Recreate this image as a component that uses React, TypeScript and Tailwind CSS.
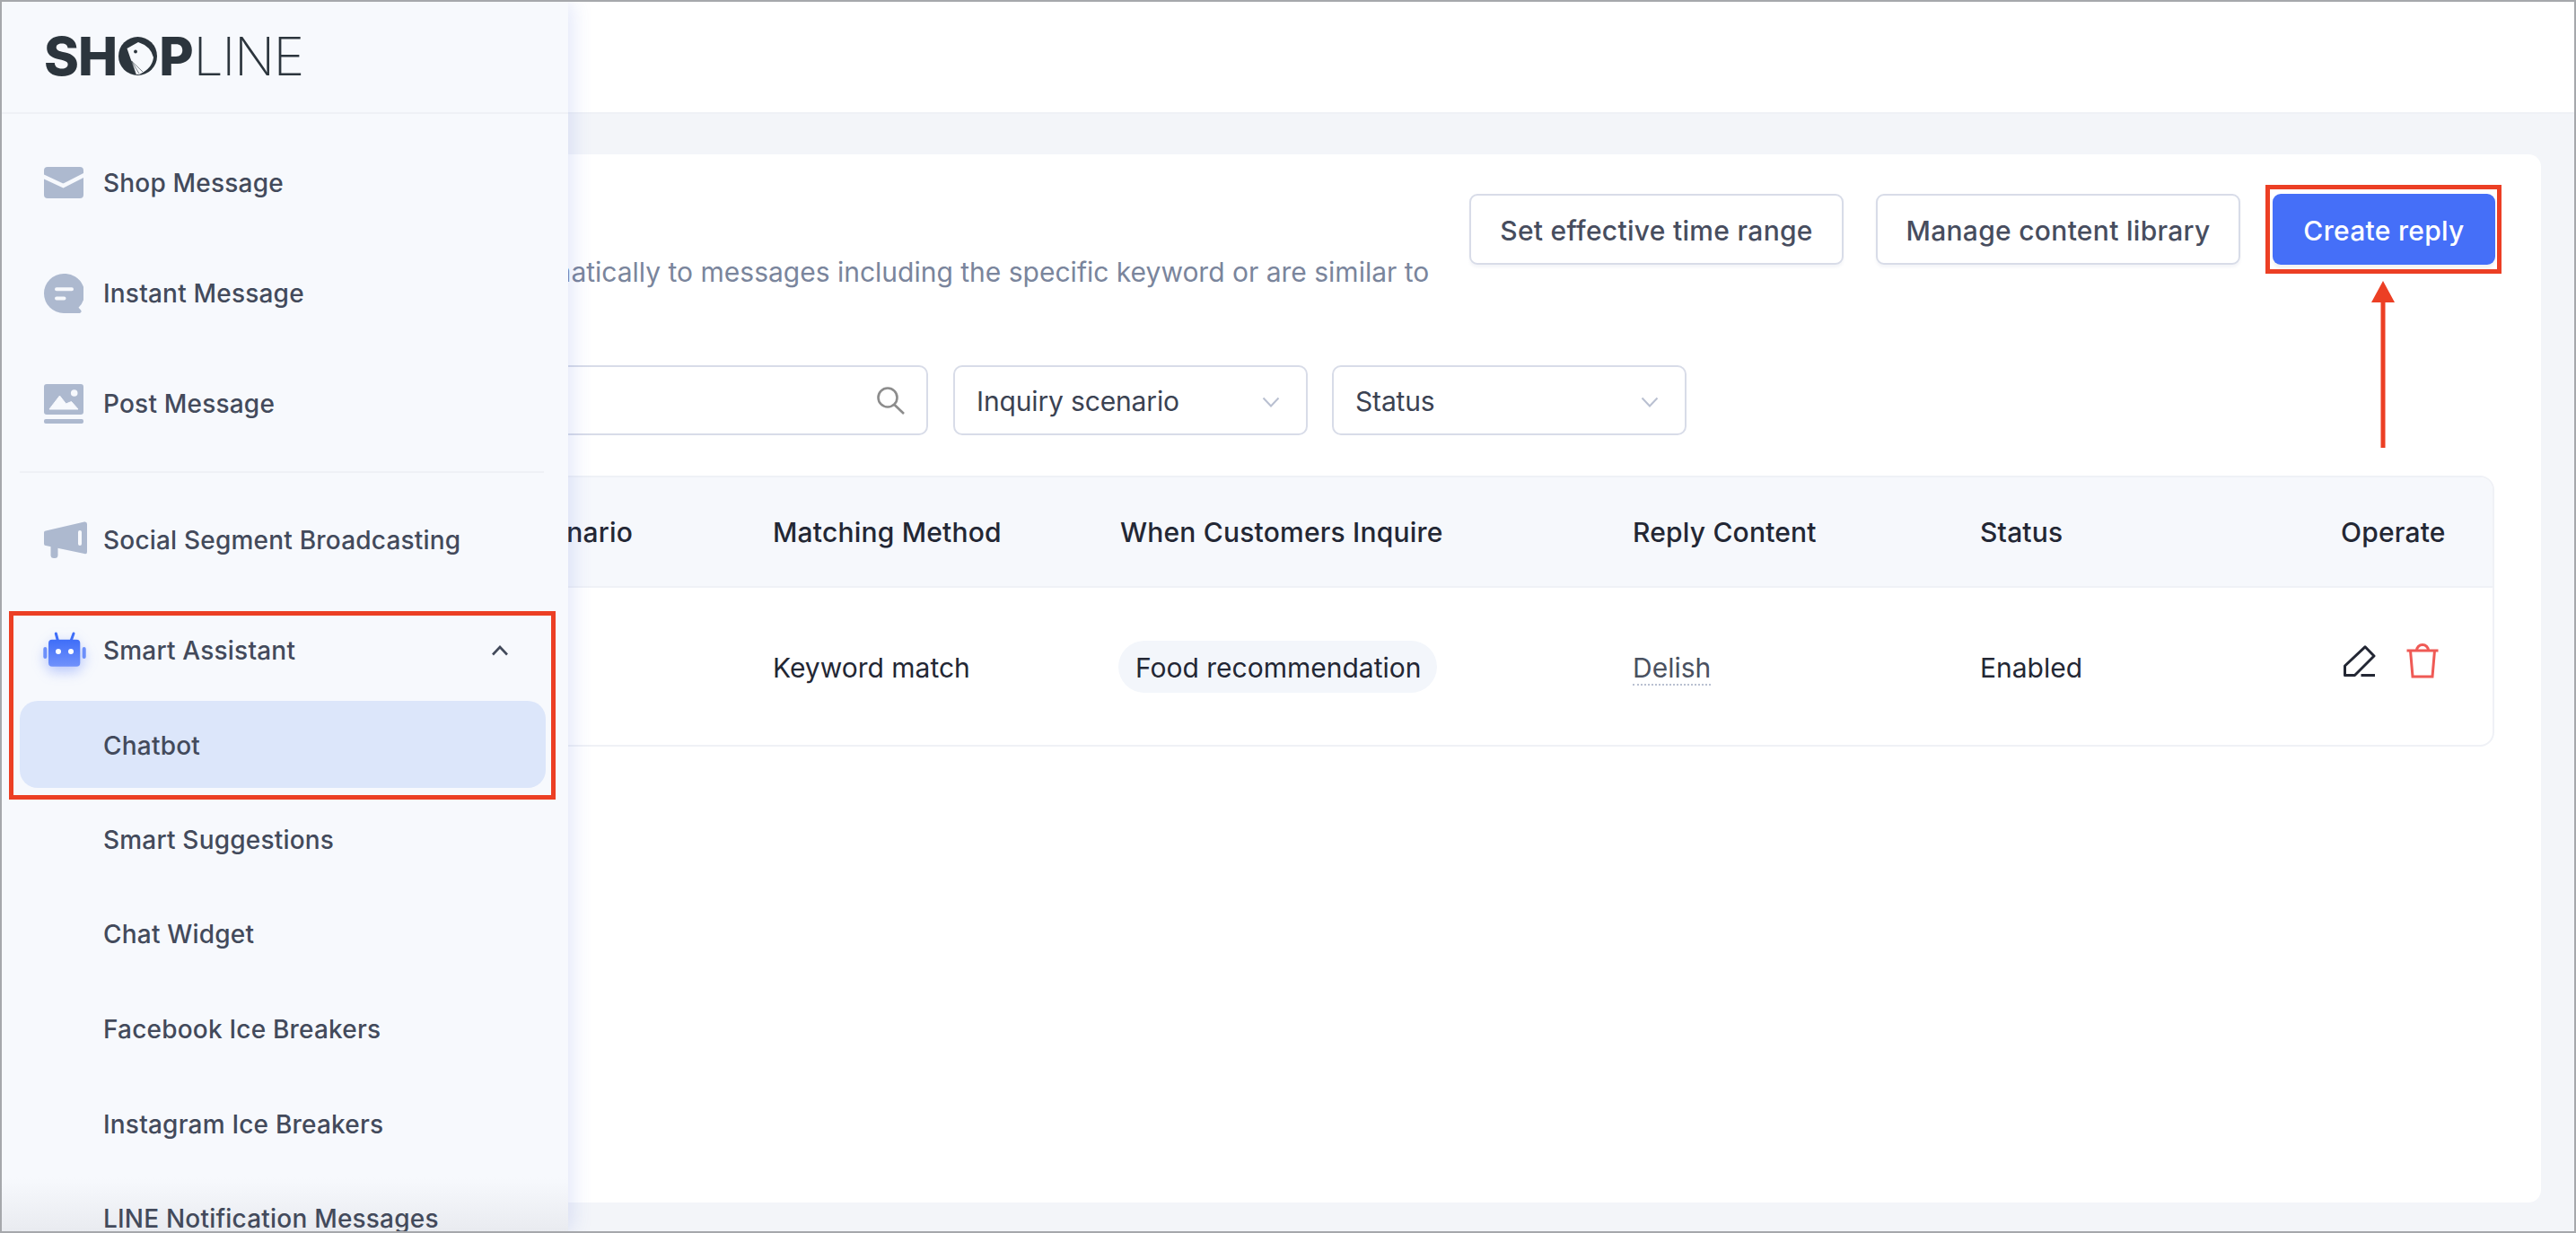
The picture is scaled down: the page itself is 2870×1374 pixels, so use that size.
import React from "react";

const Chevron = () => (
  <svg width="20" height="12" viewBox="0 0 20 12" fill="none" stroke="#b9c0d1" strokeWidth="2" className="mt-[3px]"><path d="M1.5 1.5 L10 10.5 L18.5 1.5" /></svg>
);

const MailIcon = () => (
  <svg width="44" height="35" viewBox="0 0 44 35"><rect width="44" height="35" rx="4" fill="#adb9cf" /><path d="M-1 10.5 L21.5 21 L45 9" fill="none" stroke="#f7f9fd" strokeWidth="4.5" /></svg>
);
const BubbleIcon = () => (
  <svg width="44" height="44" viewBox="0 0 44 44"><path d="M22 0a22 22 0 1 0 0 44h17.5a2 2 0 0 0 1.5-3.4l-2.5-2.8A22 22 0 0 0 22 0z" fill="#adb9cf" /><path d="M14 17.3h17M14 27.5h8.5" stroke="#f7f9fd" strokeWidth="4" strokeLinecap="round" /></svg>
);
const ImageIcon = () => (
  <svg width="44" height="44" viewBox="0 0 44 44"><rect width="44" height="34" rx="3" fill="#adb9cf" /><rect y="39" width="44" height="5" rx="2" fill="#adb9cf" /><circle cx="33.7" cy="10" r="3.8" fill="#f7f9fd" /><path d="M6 28 L17.5 13 L24.5 22 L30.5 19.5 L38 28 Z" fill="#f7f9fd" stroke="#f7f9fd" strokeLinejoin="round" /></svg>
);
const MegaphoneIcon = () => (
  <svg width="48" height="41" viewBox="0 0 48 41"><path d="M2 10.5 L45 0.5 Q48 0 48 3 V34 Q48 37 45 36 L2 27 Q0 27 0 25 V12.5 Q0 10.5 2 10.5 Z" fill="#adb9cf" /><rect x="7.5" y="25" width="8" height="16" rx="3.5" fill="#adb9cf" /><rect x="38" y="10" width="4" height="17" rx="2" fill="#f7f9fd" /></svg>
);
const RobotIcon = () => (
  <svg width="48" height="42" viewBox="0 0 48 42" className="drop-shadow-[0_6px_7px_rgba(70,110,250,0.35)]">
    <defs><linearGradient id="rb" x1="0" y1="0" x2="0" y2="1"><stop offset="0" stopColor="#3f6ef8" /><stop offset="1" stopColor="#7091fb" /></linearGradient></defs>
    <path d="M14.3 2 L16.3 9.5 M34 2 L31.3 9.5" stroke="#3f6ef8" strokeWidth="3" strokeLinecap="round" />
    <rect x="6" y="8.7" width="35.3" height="30" rx="4" fill="url(#rb)" />
    <rect x="0.3" y="17" width="4" height="13" rx="2" fill="#6c8ffa" />
    <rect x="43.7" y="17" width="4" height="13" rx="2" fill="#6c8ffa" />
    <circle cx="17" cy="22" r="3" fill="#fff" /><circle cx="31" cy="22" r="3" fill="#fff" />
  </svg>
);

const LogoO = () => (
  <svg width="43" height="43" viewBox="0 0 43 43" className="mx-[2px] shrink-0">
    <circle cx="21.5" cy="21.5" r="21.5" fill="#2c353d" />
    <path d="M9.5 13 L22 6 Q36 10.5 39 23 Q37.5 35.5 23 42 L19.5 42 L14 26 Z" fill="#f7f9fd" />
    <circle cx="19" cy="16.5" r="1.9" fill="#2c353d" />
    <path d="M14.5 27 L19.5 42 M14.5 27 L23 41 M14.5 27 L27 39" stroke="#2c353d" strokeWidth="0.6" />
  </svg>
);

const NavItem = ({ icon, label }: { icon: React.ReactNode; label: string }) => (
  <div className="flex h-[123px] shrink-0 items-center">
    <div className="ml-[47px] flex w-[66px] shrink-0 items-center">{icon}</div>
    <span>{label}</span>
  </div>
);

const SubItem = ({ label }: { label: string }) => (
  <div className="flex h-[105.6px] shrink-0 items-center pl-[113px] leading-[28px]">{label}</div>
);

const Btn = ({ label, cls }: { label: string; cls: string }) => (
  <button className={`h-[79px] rounded-[9px] pt-[3px] text-[30px] font-medium tracking-[0.3px] whitespace-nowrap ${cls}`}>{label}</button>
);

const Select = ({ label }: { label: string }) => (
  <div className="flex h-[78px] w-[395px] items-center justify-between rounded-[10px] border-2 border-[#d8dce8] pl-[24px] pr-[29px] text-[30px] tracking-[-0.15px] text-[#3b4252]">
    <span className="pt-[2px]">{label}</span>
    <Chevron />
  </div>
);

export default function App() {
  return (
    <div className="relative h-[1374px] w-full overflow-hidden border-2 border-[#a6a8ac] bg-[#f3f5f9] font-[family-name:Inter,sans-serif]">
      {/* Sidebar overlay */}
      <aside className="absolute left-0 top-0 z-10 h-full w-[631px] bg-[#f7f9fd] text-[28px] font-medium tracking-[0.2px] text-[#434a5b] shadow-[4px_0_22px_rgba(70,100,220,0.16)]">
        <div className="pointer-events-none absolute bottom-0 left-0 right-0 h-[60px] bg-gradient-to-b from-transparent to-[#e9ebf0]" />
        <div className="relative flex h-[125px] items-center border-b-2 border-[#eff1f6] pb-[2px] pl-[47px]">
          <div className="flex items-center text-[59px] leading-[43px] tracking-normal text-[#2c353d]">
            <span className="font-extrabold tracking-[-1px]">SH</span>
            <LogoO />
            <span className="font-extrabold">P</span>
            <span className="font-extralight tracking-[-1.5px]">LINE</span>
          </div>
        </div>
        <div className="relative flex h-[1247px] flex-col overflow-hidden pt-[15px]">
          <NavItem icon={<MailIcon />} label="Shop Message" />
          <NavItem icon={<BubbleIcon />} label="Instant Message" />
          <NavItem icon={<ImageIcon />} label="Post Message" />
          <div className="mx-[20px] mt-[14px] h-[2px] w-[584px] shrink-0 bg-[#eff1f6]" />
          <div className="mt-[13px] shrink-0">
            <NavItem icon={<MegaphoneIcon />} label="Social Segment Broadcasting" />
          </div>
          <div className="mt-[10px] flex h-[105px] shrink-0 items-center pb-[2px]">
            <div className="ml-[46px] flex w-[67px] shrink-0 items-center"><RobotIcon /></div>
            <span className="flex-1">Smart Assistant</span>
            <svg width="20" height="13" viewBox="0 0 20 13" fill="none" stroke="#434a5b" strokeWidth="2.6" className="mr-[66px]"><path d="M2 11.5 L10 3 L18 11.5" /></svg>
          </div>
          <div className="ml-[20px] mt-[3px] flex h-[97px] w-[586px] shrink-0 items-center rounded-[20px] bg-[#dce6fa] pl-[93px] pt-[3px]">Chatbot</div>
          <div className="mt-[5px] flex flex-col">
            <SubItem label="Smart Suggestions" />
            <SubItem label="Chat Widget" />
            <SubItem label="Facebook Ice Breakers" />
            <SubItem label="Instagram Ice Breakers" />
            <SubItem label="LINE Notification Messages" />
          </div>
        </div>
        <div className="pointer-events-none absolute left-[8px] top-[679px] h-[210px] w-[609px] border-[5px] border-[#ec3f24]" />
      </aside>

      {/* Main */}
      <div className="h-[125px] border-b-2 border-[#eff1f6] bg-white" />
      <main className="pl-[386px] pr-[37px] pt-[45px]">
        <section className="h-[1168px] rounded-[14px] bg-white px-[52px] pt-[44px]">
          <div className="flex h-[191px] justify-between">
            <div className="w-[1170px] pt-[64px] text-[30px] leading-[46px] text-[#7a859c]">
              <p className="-ml-[3px]">Replies automatically to messages including the specific keyword or are similar to the question</p>
            </div>
            <div className="-mr-[1px] flex gap-[36px]">
              <Btn label="Set effective time range" cls="ml-[2px] w-[417px] border-2 border-[#d8dce8] bg-white text-[#474d5e] shadow-[0_3px_3px_rgba(120,130,160,0.08)]" />
              <Btn label="Manage content library" cls="w-[406px] border-2 border-[#d8dce8] bg-white text-[#474d5e] shadow-[0_3px_3px_rgba(120,130,160,0.08)]" />
              <Btn label="Create reply" cls="w-[248px] bg-[#456ff8] text-white shadow-[0_4px_3px_rgba(0,0,0,0.05)]" />
            </div>
          </div>

          <div className="flex gap-[27px]">
            <div className="mr-[1px] flex h-[78px] w-[594px] items-center justify-end rounded-[10px] border-2 border-[#d8dce8] pr-[22px]">
              <svg width="34" height="32" viewBox="0 0 34 32" fill="none" stroke="#8c8c8c" strokeWidth="2.6"><circle cx="13" cy="13" r="10.5" /><path d="M20.5 21 L31 31" /></svg>
            </div>
            <Select label="Inquiry scenario" />
            <Select label="Status" />
          </div>

          <div className="mt-[45px] overflow-hidden rounded-[16px] border-2 border-[#eff1f6] text-[30px] text-[#232734]">
            <div className="grid h-[123px] grid-cols-[391px_387px_571px_387px_402px_1fr] items-center border-b-2 border-[#eff1f6] bg-[#f6f8fc] pl-[28px] pt-[2px] font-medium tracking-[0.2px]">
              <span className="pr-[156px] text-right">Scenario</span>
              <span>Matching Method</span>
              <span>When Customers Inquire</span>
              <span>Reply Content</span>
              <span>Status</span>
              <span>Operate</span>
            </div>
            <div className="grid h-[175px] grid-cols-[391px_388px_570px_387px_402px_1fr] items-center pl-[28px]">
              <span />
              <span className="pt-[3px]">Keyword match</span>
              <span className="-ml-[3px] flex h-[58px] w-[355px] items-center rounded-full bg-[#f3f6fb] pl-[19px] pt-[3px]">Food recommendation</span>
              <span className="pt-[3px]"><span className="border-b-2 border-dotted border-[#b9c0d1] text-[#4a5160]">Delish</span></span>
              <span className="pt-[3px]">Enabled</span>
              <span className="mb-[12px] ml-[3px] flex items-center gap-[34px]">
                <svg width="36" height="36" viewBox="0 0 36 36" fill="none" stroke="#232734" strokeWidth="3"><path d="M1.5 23 L24 1.8 L34 12 L12.5 33.5 H1.5 Z" strokeLinejoin="round" /><path d="M19.5 33.5 H35" /></svg>
                <svg width="36" height="39" viewBox="0 0 36 39" fill="none" stroke="#ef5a55" strokeWidth="3"><path d="M0.5 8 H35.5" /><path d="M4.5 8 L7 37 H29 L31.5 8" /><path d="M11.5 8 A6.5 6.5 0 0 1 24.5 8" /></svg>
              </span>
            </div>
          </div>
        </section>
      </main>

      {/* Annotation */}
      <div className="pointer-events-none absolute left-[2522px] top-[204px] z-20 h-[99px] w-[263px] border-[5px] border-[#ec3f24]" />
      <svg width="30" height="190" viewBox="0 0 30 190" className="absolute left-[2638px] top-[309px] z-20">
        <path d="M15 2 L28 26 H17.5 V188 H12.5 V26 H2 Z" fill="#ec3f24" />
      </svg>
    </div>
  );
}
